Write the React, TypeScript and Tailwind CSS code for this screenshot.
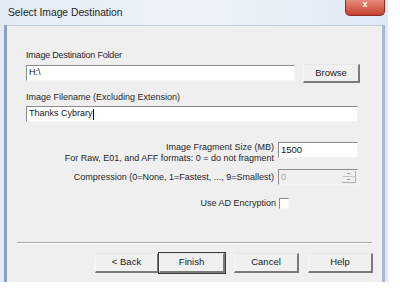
import type React from 'react';

const font = { fontFamily: '"Liberation Sans", Arial, sans-serif' };

function Sunken({
  className,
  children,
  disabled = false,
}: {
  className: string;
  children?: React.ReactNode;
  disabled?: boolean;
}): React.ReactElement {
  return (
    <div
      className={`relative flex items-center border-t border-l border-t-[#8c8c8c] border-l-[#8c8c8c] border-b border-r border-b-[#f4f4f4] border-r-[#f4f4f4] ${
        disabled ? 'bg-[#f0f0f0] text-[#a8a8a8]' : 'bg-white text-[#202020]'
      } ${className}`}
    >
      {children}
    </div>
  );
}

function WinButton({
  label,
  isDefault = false,
  className = '',
}: {
  label: string;
  isDefault?: boolean;
  className?: string;
}): React.ReactElement {
  return (
    <div
      className={`flex items-center justify-center text-[9.5px] text-[#1a1a1a] bg-[#f0f0f0] border-t border-l border-t-[#e6e6e6] border-l-[#f6f6f6] border-b-2 border-r-2 border-b-[#7a7a7a] border-r-[#7a7a7a] ${
        isDefault ? 'outline outline-1 outline-[#3a3a3a]' : ''
      } ${className}`}
    >
      {label}
    </div>
  );
}

export default function App(): React.ReactElement {
  return (
    <div className="w-[400px] h-[292px] bg-white overflow-hidden" style={font}>
      <div className="relative w-[388px] h-[282px] bg-gradient-to-r from-[#e3ecf6] via-[#eef3f9] to-[#dfe9f4] flex flex-col">
        {/* title bar */}
        <div className="h-[25px] flex items-center pl-[8px] text-[10.3px] text-[#1e1e1e]">
          Select Image Destination
        </div>
        <div className="absolute left-[345px] top-0 w-[40px] h-[16px] rounded-b-[5px] bg-gradient-to-b from-[#e98a7c] to-[#c3402c] border border-t-0 border-[#8f2a1e] flex items-start justify-center">
          <span className="text-white text-[9px] leading-[8px] font-bold">x</span>
        </div>

        {/* client area */}
        <div className="flex-1 ml-[4px] mr-[3px] flex">
          <div className="w-[3px] bg-[#8fa0b8]" />
          <div className="flex-1 bg-[#f0eff0] border-t border-[#c5ccd6] pt-[23px] text-[9px] text-[#262626] flex flex-col">
            <div className="pl-[19px] flex flex-col">
              <div className="h-[12px] leading-[12px] tracking-[-0.2px]">Image Destination Folder</div>
              <div className="mt-[4px] h-[18px] flex items-start">
                <Sunken className="w-[269px] h-[16px] pl-[2px]">H:\</Sunken>
                <WinButton label="Browse" className="ml-[8px] -mt-[1px] w-[57px] h-[19px]" />
              </div>
              <div className="mt-[8px] h-[12px] leading-[12px]">Image Filename (Excluding Extension)</div>
              <Sunken className="mt-[3px] w-[332px] h-[16px] pl-[2px]">
                Thanks Cybrary
                <span className="inline-block w-px h-[11px] bg-[#111]" />
              </Sunken>

              <div className="mt-[20px] flex items-start">
                <div className="w-[248px] text-right leading-[11px]">
                  <div>Image Fragment Size (MB)</div>
                  <div>For Raw, E01, and AFF formats: 0 = do not fragment</div>
                </div>
                <Sunken className="ml-[4px] w-[80px] h-[16px] pl-[2px] text-[9.5px]">1500</Sunken>
              </div>

              <div className="mt-[5px] flex items-center">
                <div className="w-[248px] text-right leading-[12px]">
                  Compression (0=None, 1=Fastest, ..., 9=Smallest)
                </div>
                <Sunken disabled className="ml-[4px] w-[80px] h-[16px] pl-[2px] text-[9.5px]">
                  0
                  <div className="absolute right-[1px] top-[1px] w-[14px] h-[12px] flex flex-col border-r border-b border-[#b0b0b0]">
                    <div className="flex-1 flex items-center justify-center">
                      <span className="w-[3px] h-px bg-[#a0a0a0]" />
                    </div>
                    <div className="h-px bg-[#c8c8c8]" />
                    <div className="flex-1 flex items-center justify-center">
                      <span className="w-[3px] h-px bg-[#a0a0a0]" />
                    </div>
                  </div>
                </Sunken>
              </div>

              <div className="mt-[12px] flex items-center">
                <div className="w-[250px] text-right leading-[12px]">Use AD Encryption</div>
                <Sunken className="ml-[3px] w-[10px] h-[11px]" />
              </div>
            </div>

            <div className="mt-[33px] mx-[10px] h-px bg-[#a8a8a8] border-b border-white box-content" />

            <div className="mt-[9px] flex justify-end pr-[9px]">
              <WinButton label="< Back" className="w-[64px] h-[20px]" />
              <WinButton label="Finish" isDefault className="w-[66px] h-[20px]" />
              <WinButton label="Cancel" className="ml-[9px] w-[65px] h-[20px]" />
              <WinButton label="Help" className="ml-[9px] w-[65px] h-[20px]" />
            </div>
          </div>
          <div className="w-[3px] bg-[#a7bbd6]" />
        </div>
      </div>
    </div>
  );
}
